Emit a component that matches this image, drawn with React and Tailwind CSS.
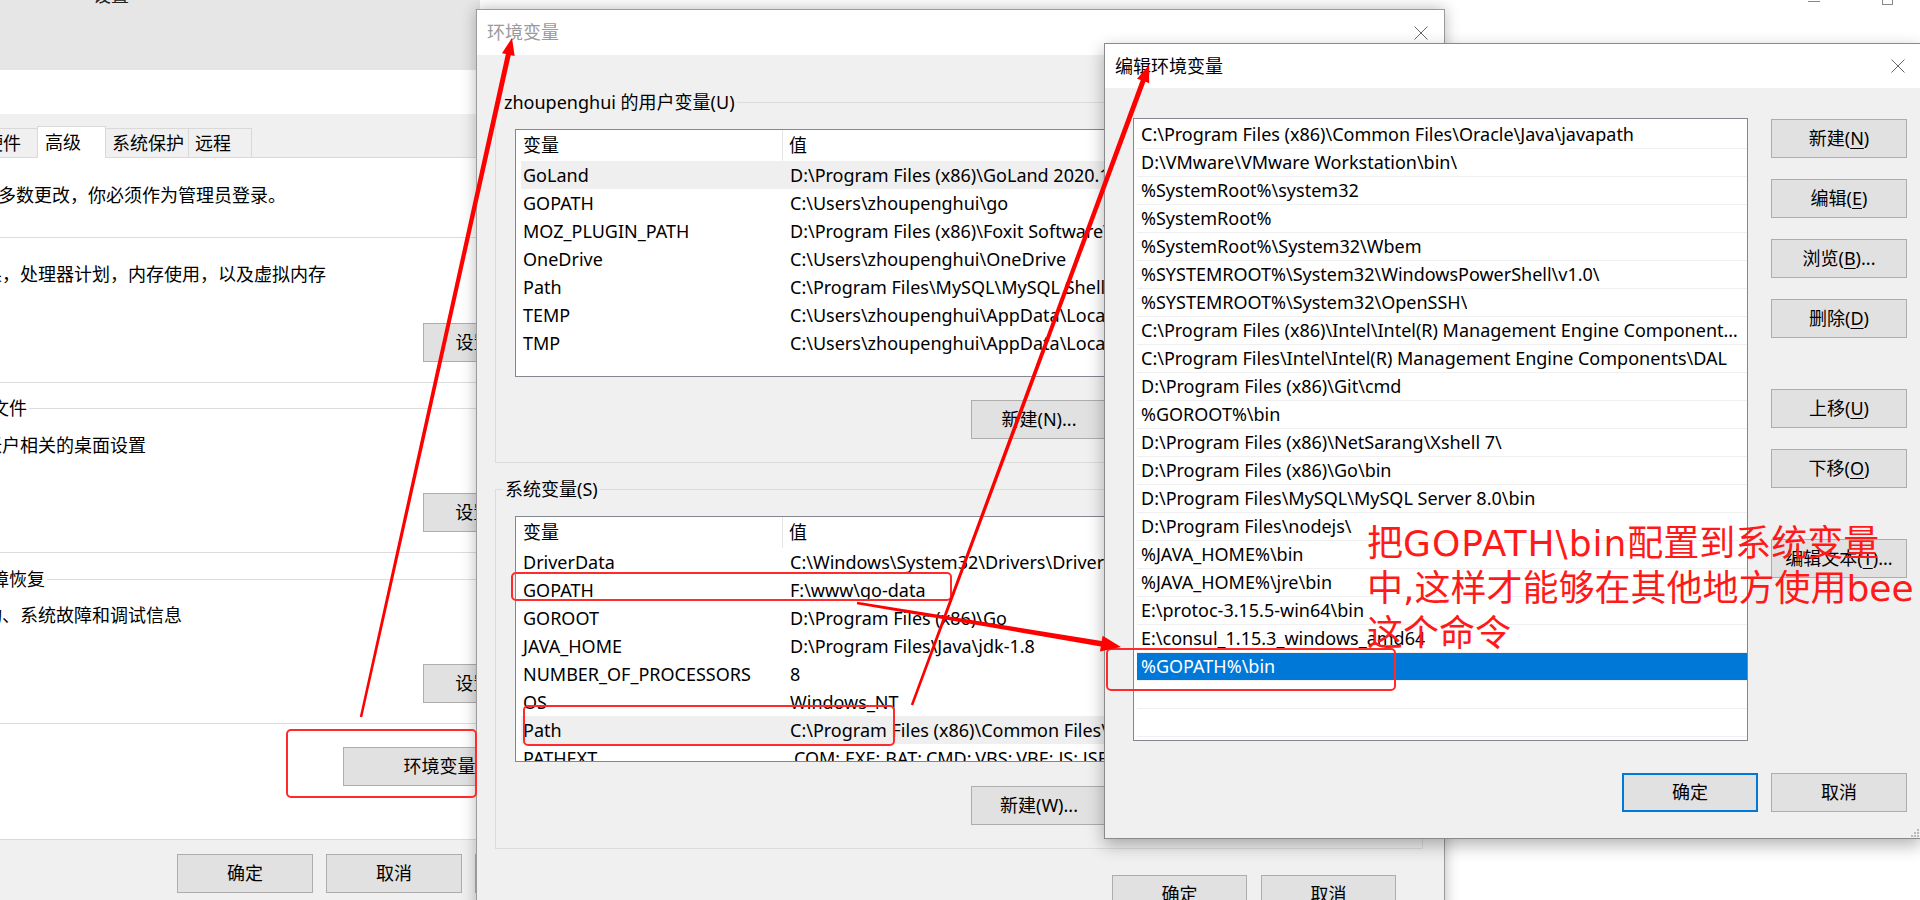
import React from "react";

const userVars = [
  ["GoLand", "D:\\Program Files (x86)\\GoLand 2020.1\\bin;", true],
  ["GOPATH", "C:\\Users\\zhoupenghui\\go"],
  ["MOZ_PLUGIN_PATH", "D:\\Program Files (x86)\\Foxit Software\\Foxit Reader\\plugins\\"],
  ["OneDrive", "C:\\Users\\zhoupenghui\\OneDrive"],
  ["Path", "C:\\Program Files\\MySQL\\MySQL Shell 8.0\\bin\\;C:\\Users\\zhoupenghui\\AppData\\Local\\Microsoft\\WindowsApps;"],
  ["TEMP", "C:\\Users\\zhoupenghui\\AppData\\Local\\Temp"],
  ["TMP", "C:\\Users\\zhoupenghui\\AppData\\Local\\Temp"],
];

const sysVars = [
  ["DriverData", "C:\\Windows\\System32\\Drivers\\DriverData"],
  ["GOPATH", "F:\\www\\go-data"],
  ["GOROOT", "D:\\Program Files (x86)\\Go"],
  ["JAVA_HOME", "D:\\Program Files\\Java\\jdk-1.8"],
  ["NUMBER_OF_PROCESSORS", "8"],
  ["OS", "Windows_NT"],
  ["Path", "C:\\Program Files (x86)\\Common Files\\Oracle\\Java\\javapath;D:\\VMware\\VMware Workstation\\bin\\;", true],
  ["PATHEXT", ".COM;.EXE;.BAT;.CMD;.VBS;.VBE;.JS;.JSE;.WSF;.WSH;.MSC"],
];

const paths = [
  "C:\\Program Files (x86)\\Common Files\\Oracle\\Java\\javapath",
  "D:\\VMware\\VMware Workstation\\bin\\",
  "%SystemRoot%\\system32",
  "%SystemRoot%",
  "%SystemRoot%\\System32\\Wbem",
  "%SYSTEMROOT%\\System32\\WindowsPowerShell\\v1.0\\",
  "%SYSTEMROOT%\\System32\\OpenSSH\\",
  "C:\\Program Files (x86)\\Intel\\Intel(R) Management Engine Components\\DAL",
  "C:\\Program Files\\Intel\\Intel(R) Management Engine Components\\DAL",
  "D:\\Program Files (x86)\\Git\\cmd",
  "%GOROOT%\\bin",
  "D:\\Program Files (x86)\\NetSarang\\Xshell 7\\",
  "D:\\Program Files (x86)\\Go\\bin",
  "D:\\Program Files\\MySQL\\MySQL Server 8.0\\bin",
  "D:\\Program Files\\nodejs\\",
  "%JAVA_HOME%\\bin",
  "%JAVA_HOME%\\jre\\bin",
  "E:\\protoc-3.15.5-win64\\bin",
  "E:\\consul_1.15.3_windows_amd64",
];

function XIcon() {
  return (
    <svg width="14" height="14" viewBox="0 0 14 14">
      <path d="M0.5 0.5 L13.5 13.5 M13.5 0.5 L0.5 13.5" stroke="#666" strokeWidth="1" fill="none" />
    </svg>
  );
}

function Btn({ children, w = "w-[136px]", cls = "", primary = false }) {
  return (
    <div
      className={`flex h-[39px] shrink-0 items-center justify-center whitespace-nowrap bg-[#e1e1e1] ${w} ${
        primary ? "border-2 border-[#0078d7]" : "border border-[#adadad]"
      } ${cls}`}
    >
      {children}
    </div>
  );
}

function U({ c }) {
  return <span className="underline decoration-1 underline-offset-[3px]">{c}</span>;
}

function Group({ legend, text, mt, tmt, bmt, btn }) {
  return (
    <fieldset className={`ml-[7px] mr-[20px] border border-[#dcdcdc] pb-[20px] ${mt}`}>
      <legend className="ml-[9px] px-[2px] leading-[24px]">{legend}</legend>
      <div className={`whitespace-nowrap pl-[22px] leading-[28px] ${tmt}`}>{text}</div>
      <div className={`ml-[515px] ${bmt}`}>
        <Btn>{btn}</Btn>
      </div>
    </fieldset>
  );
}

function SettingsBg() {
  return (
    <>
      <div className="absolute left-0 top-0 flex h-[70px] w-[480px] items-start bg-[#e6e6e6]">
        <span className="-mt-[18px] ml-[30px] text-[#333]">←</span>
        <span className="-mt-[18px] ml-[45px] text-[#222]">设置</span>
      </div>
      <div className="absolute left-[1808px] top-0 flex items-start gap-[62px]">
        <div className="mt-[1px] h-px w-[12px] bg-[#888]" />
        <div className="-mt-[6px] h-[11px] w-[11px] border border-[#888]" />
      </div>
    </>
  );
}

function SysProps() {
  return (
    <div className="absolute left-[-100px] top-[70px] flex h-[840px] w-[700px] flex-col bg-[#f0f0f0]">
      <div className="h-[44px] shrink-0 bg-white" />
      <div className="flex h-[43px] shrink-0 items-end pl-[71px]">
        <div className="flex h-[29px] w-[66px] items-center border-l border-t border-[#d9d9d9] pl-[13px]">硬件</div>
        <div className="relative z-10 -mb-px flex h-[32px] w-[69px] items-center border-l border-r border-t border-[#d9d9d9] bg-white pl-[7px]">
          高级
        </div>
        <div className="flex h-[29px] w-[82px] items-center border-t border-[#d9d9d9] pl-[6px]">系统保护</div>
        <div className="flex h-[29px] w-[64px] items-center border-l border-r border-t border-[#d9d9d9] pl-[6px]">远程</div>
      </div>
      <div className="flex h-[683px] shrink-0 flex-col border-y border-[#d9d9d9] bg-white">
        <div className="mt-[23px] whitespace-nowrap pl-[26px] leading-[28px]">要进行大多数更改，你必须作为管理员登录。</div>
        <Group
          legend="性能"
          text="视觉效果，处理器计划，内存使用，以及虚拟内存"
          mt="mt-[16px]"
          tmt="mt-[11px]"
          bmt="mt-[35px]"
          btn="设置(S)..."
        />
        <Group
          legend="用户配置文件"
          text="与登录帐户相关的桌面设置"
          mt="mt-[13px]"
          tmt="mt-[11px]"
          bmt="mt-[34px]"
          btn="设置(E)..."
        />
        <Group
          legend="启动和故障恢复"
          text="系统启动、系统故障和调试信息"
          mt="mt-[14px]"
          tmt="mt-[10px]"
          bmt="mt-[35px]"
          btn="设置(T)..."
        />
        <div className="ml-[443px] mt-[23px]">
          <Btn w="w-[232px]">环境变量(N)...</Btn>
        </div>
      </div>
      <div className="mt-[14px] flex gap-[13px] pl-[277px]">
        <Btn>确定</Btn>
        <Btn>取消</Btn>
        <Btn>应用(A)</Btn>
      </div>
    </div>
  );
}

function VarList({ rows, h, mt }) {
  return (
    <div className={`ml-[19px] w-[888px] overflow-hidden border border-[#828790] bg-white ${h} ${mt}`}>
      <div className="flex h-[31px]">
        <div className="flex w-[267px] items-center border-r border-[#e5e5e5] pl-[7px]">变量</div>
        <div className="flex items-center pl-[6px]">值</div>
      </div>
      {rows.map(([n, v, hl]) => (
        <div
          key={n}
          className={`ml-[5px] flex h-[28px] items-center whitespace-nowrap ${hl ? "bg-[#efefef]" : ""}`}
        >
          <div className="w-[262px] shrink-0 pl-[2px]">{n}</div>
          <div className="pl-[7px]">{v}</div>
        </div>
      ))}
    </div>
  );
}

function EnvDialog() {
  return (
    <div className="absolute left-[476px] top-[9px] flex h-[920px] w-[969px] flex-col border border-[#9b9b9b] bg-[#f0f0f0] shadow-[0_0_14px_rgba(0,0,0,0.28)]">
      <div className="flex h-[45px] shrink-0 items-center justify-between bg-white pl-[10px] pr-[16px] text-[#9a9a9a]">
        <span>环境变量</span>
        <XIcon />
      </div>
      <div className="flex flex-col pl-[18px] pr-[21px]">
        <fieldset className="mt-[35px] border border-[#dcdcdc] pb-[23px]">
          <legend className="ml-[6px] px-[2px] leading-[24px]">zhoupenghui 的用户变量(U)</legend>
          <VarList rows={userVars} h="h-[248px]" mt="mt-[15px]" />
          <div className="mt-[23px] flex justify-end gap-[12px] pr-[19px]">
            <Btn>新建(N)...</Btn>
            <Btn>编辑(E)...</Btn>
            <Btn>删除(D)</Btn>
          </div>
        </fieldset>
        <fieldset className="mt-[14px] border border-[#dcdcdc] pb-[23px]">
          <legend className="ml-[7px] px-[2px] leading-[24px]">系统变量(S)</legend>
          <VarList rows={sysVars} h="h-[246px]" mt="mt-[15px]" />
          <div className="mt-[24px] flex justify-end gap-[12px] pr-[19px]">
            <Btn>新建(W)...</Btn>
            <Btn>编辑(I)...</Btn>
            <Btn>删除(L)</Btn>
          </div>
        </fieldset>
        <div className="mt-[26px] flex justify-end gap-[14px] pr-[27px]">
          <Btn w="w-[135px]">确定</Btn>
          <Btn w="w-[135px]">取消</Btn>
        </div>
      </div>
    </div>
  );
}

function EditDialog() {
  return (
    <div className="absolute left-[1104px] top-[43px] flex h-[796px] w-[817px] flex-col border border-[#8a8a8a] bg-[#f0f0f0] shadow-[0_6px_16px_rgba(0,0,0,0.3)]">
      <div className="flex h-[44px] shrink-0 items-center justify-between bg-white pl-[10px] pr-[15px]">
        <span>编辑环境变量</span>
        <XIcon />
      </div>
      <div className="flex">
        <div className="ml-[28px] mt-[30px] h-[623px] w-[615px] overflow-hidden border border-[#828790] bg-white pt-[2px]">
          {paths.map((p) => (
            <div key={p} className="ml-[3px] flex h-[28px] items-center whitespace-nowrap border-b border-[#f0f0f0] pl-[4px] pr-[6px]">
              <span className="truncate">{p}</span>
            </div>
          ))}
          <div className="ml-[3px] flex h-[28px] items-center border-b border-[#f0f0f0] bg-[#0078d7] pl-[4px] text-white">
            %GOPATH%\bin
          </div>
          <div className="ml-[3px] h-[28px] border-b border-[#f0f0f0]" />
          <div className="ml-[3px] h-[28px] border-b border-[#f0f0f0]" />
        </div>
        <div className="ml-[23px] mt-[31px] flex flex-col">
          <Btn>
            新建(<U c="N" />)
          </Btn>
          <Btn cls="mt-[21px]">
            编辑(<U c="E" />)
          </Btn>
          <Btn cls="mt-[21px]">
            浏览(<U c="B" />)...
          </Btn>
          <Btn cls="mt-[21px]">
            删除(<U c="D" />)
          </Btn>
          <Btn cls="mt-[51px]">
            上移(<U c="U" />)
          </Btn>
          <Btn cls="mt-[21px]">
            下移(<U c="O" />)
          </Btn>
          <Btn cls="mt-[51px]">
            编辑文本(<U c="T" />)...
          </Btn>
        </div>
      </div>
      <div className="mt-[32px] flex justify-end gap-[13px] pr-[13px]">
        <Btn primary>确定</Btn>
        <Btn>取消</Btn>
      </div>
      <svg className="absolute bottom-[1px] right-[1px]" width="8" height="8" viewBox="0 0 8 8">
        <rect x="6" y="0" width="2" height="2" fill="#bbb" />
        <rect x="3" y="3" width="2" height="2" fill="#bbb" />
        <rect x="6" y="3" width="2" height="2" fill="#bbb" />
        <rect x="0" y="6" width="2" height="2" fill="#bbb" />
        <rect x="3" y="6" width="2" height="2" fill="#bbb" />
        <rect x="6" y="6" width="2" height="2" fill="#bbb" />
      </svg>
    </div>
  );
}

function Arrow({ x1, y1, x2, y2, w0, w1, hl, hw }) {
  const dx = x2 - x1;
  const dy = y2 - y1;
  const L = Math.hypot(dx, dy);
  const ux = dx / L;
  const uy = dy / L;
  const nx = -uy;
  const ny = ux;
  const bx = x2 - ux * hl;
  const by = y2 - uy * hl;
  const pts = [
    [x1 + (nx * w0) / 2, y1 + (ny * w0) / 2],
    [bx + (nx * w1) / 2, by + (ny * w1) / 2],
    [bx + nx * hw, by + ny * hw],
    [x2, y2],
    [bx - nx * hw, by - ny * hw],
    [bx - (nx * w1) / 2, by - (ny * w1) / 2],
    [x1 - (nx * w0) / 2, y1 - (ny * w0) / 2],
  ];
  return <polygon points={pts.map((p) => p.join(",")).join(" ")} fill="#ff0000" />;
}

function Annotations() {
  return (
    <>
      <svg className="pointer-events-none absolute left-0 top-0" width="1920" height="900" viewBox="0 0 1920 900">
        <g fill="none" stroke="#ff2b2b" strokeWidth="2">
          <rect x="512" y="573" width="439" height="27" rx="4" />
          <rect x="524" y="706" width="370" height="39" rx="4" />
          <rect x="287" y="730" width="189" height="67" rx="4" />
          <rect x="1107" y="649" width="288" height="41" rx="4" />
        </g>
        <Arrow x1={361} y1={717} x2={512} y2={38} w0={2.5} w1={5} hl={17} hw={6.5} />
        <Arrow x1={912} y1={705} x2={1149} y2={65} w0={2.5} w1={5} hl={17} hw={6.5} />
        <Arrow x1={857} y1={603} x2={1121} y2={647} w0={2.5} w1={5.5} hl={20} hw={8} />
      </svg>
      <div className="pointer-events-none absolute left-[1367px] top-[521px] whitespace-nowrap font-['DejaVu_Sans','Noto_Sans_CJK_SC',sans-serif] text-[36px] leading-[45px] text-[#ff1a1a]">
        <div>
          把<span className="tracking-[1px]">{"GOPATH\\bin"}</span>配置到系统变量
        </div>
        <div>中,这样才能够在其他地方使用bee</div>
        <div>这个命令</div>
      </div>
    </>
  );
}

export default function App() {
  return (
    <div className="relative h-[900px] w-[1920px] overflow-hidden bg-white font-['Noto_Sans','Noto_Sans_CJK_SC',sans-serif] text-[18px] text-black">
      <SettingsBg />
      <SysProps />
      <EnvDialog />
      <EditDialog />
      <Annotations />
    </div>
  );
}
